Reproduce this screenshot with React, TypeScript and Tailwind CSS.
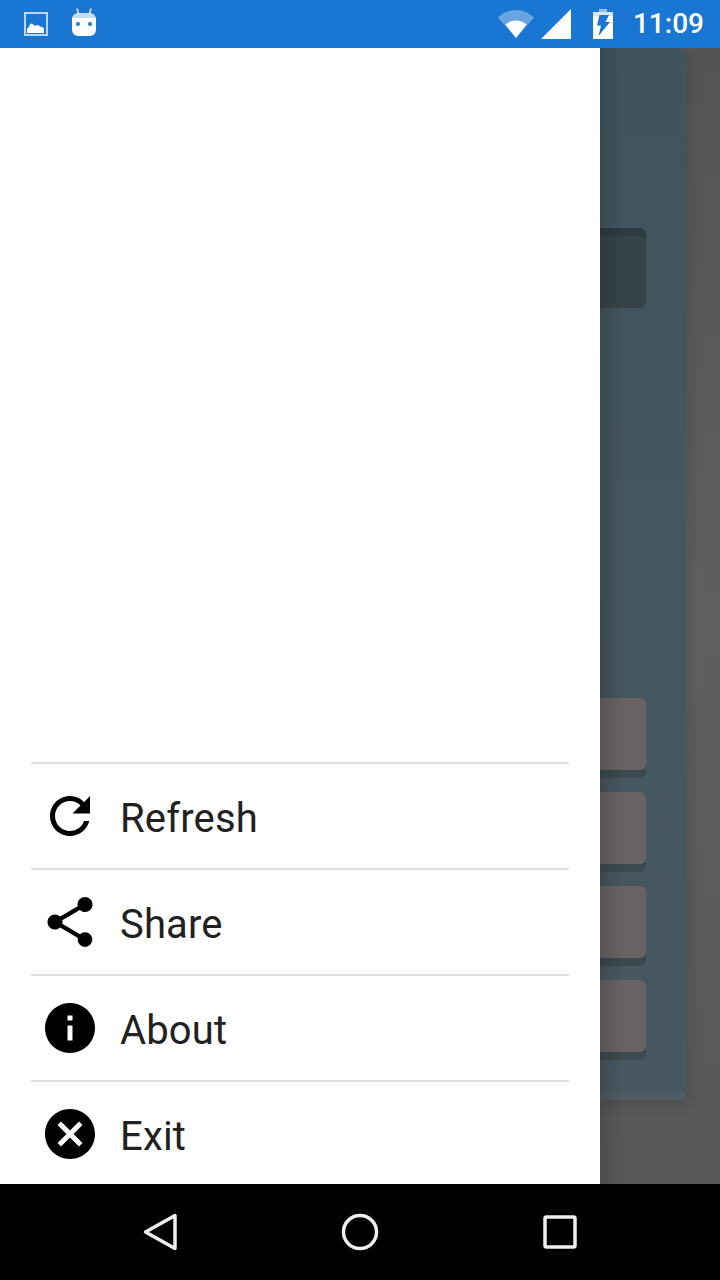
const rows = [
  { label: "Refresh", d: "M17.65 6.35C16.2 4.9 14.21 4 12 4c-4.42 0-7.99 3.58-7.99 8s3.57 8 7.99 8c3.73 0 6.84-2.55 7.73-6h-2.08c-.82 2.33-3.04 4-5.65 4-3.31 0-6-2.69-6-6s2.69-6 6-6c1.66 0 3.14.69 4.22 1.78L13 11h7V4l-2.35 2.35z" },
  { label: "Share", d: "M18 16.08c-.76 0-1.44.3-1.96.77L8.91 12.7c.05-.23.09-.46.09-.7s-.04-.47-.09-.7l7.05-4.11c.54.5 1.25.81 2.04.81 1.66 0 3-1.34 3-3s-1.34-3-3-3-3 1.34-3 3c0 .24.04.47.09.7L8.04 9.81C7.5 9.31 6.79 9 6 9c-1.66 0-3 1.34-3 3s1.34 3 3 3c.79 0 1.5-.31 2.04-.81l7.12 4.16c-.05.21-.08.43-.08.65 0 1.61 1.31 2.92 2.92 2.92s2.92-1.31 2.92-2.92-1.31-2.92-2.92-2.92z" },
  { label: "About", d: "M12 2C6.48 2 2 6.48 2 12s4.48 10 10 10 10-4.48 10-10S17.52 2 12 2zm1 15h-2v-6h2v6zm0-8h-2V7h2v2z" },
  { label: "Exit", d: "M12 2C6.47 2 2 6.47 2 12s4.47 10 10 10 10-4.47 10-10S17.53 2 12 2zm5 13.59L15.59 17 12 13.41 8.41 17 7 15.59 10.59 12 7 8.41 8.41 7 12 10.59 15.59 7 17 8.41 13.41 12 17 15.59z" },
];

function StatusBar() {
  return (
    <div className="h-[48px] bg-[#1976d2] flex items-center pl-[24px] pr-[16px] shrink-0">
      <svg width="24" height="24" viewBox="0 0 24 24">
        <rect x="1" y="1" width="22" height="22" fill="none" stroke="#fff" strokeWidth="2" opacity="0.7" />
        <path d="M3 21v-4.500c1-.3 1.500-1 2-2 .5-1.500 1-3 2.500-3 1.200 0 1.800 1.500 3 2.200 1 .5 1.800-.7 3-.7 1.500 0 2 1.500 3.500 1.800 1.500.2 2.500.5 3 2.500V21z" fill="#fff" />
      </svg>
      <svg width="24" height="32" viewBox="0 0 24 32" className="ml-[24px]">
        <path d="M5 0.500l1.500 5.500" stroke="#fff" strokeWidth="1.600" opacity="0.8" />
        <path d="M19 0.500l-1.500 5.500" stroke="#fff" strokeWidth="1.600" opacity="0.8" />
        <path d="M0 11.500C0 7.500 2.500 5 7 5h10c4.500 0 7 2.500 7 6.500V10H0z" fill="#fff" opacity="0.75" />
        <path d="M0 10h24v11c0 4.500-2.500 7-7 7H7c-4.500 0-7-2.500-7-7z" fill="#fff" />
        <circle cx="6" cy="16" r="2" fill="#1976d2" />
        <circle cx="18" cy="16" r="2" fill="#1976d2" />
      </svg>
      <div className="flex-1" />
      <svg width="36" height="28" viewBox="0 0 36 28">
        <path d="M0 7.500C4.800 3 11 0 18 0s13.200 3 18 7.500L18 28z" fill="#fff" opacity="0.35" />
        <path d="M7.500 14.500C10.400 12 14 10.500 18 10.500s7.600 1.500 10.500 4L18 28z" fill="#fff" />
      </svg>
      <svg width="30" height="30" viewBox="0 0 30 30" className="ml-[7px]">
        <path d="M30 0v30H0z" fill="#fff" />
      </svg>
      <svg width="20" height="30" viewBox="0 0 20 30" className="ml-[22px]">
        <path d="M6 0h8v3H6z" fill="#fff" opacity="0.55" />
        <path d="M0 3h20v4H0z" fill="#fff" opacity="0.75" />
        <path d="M0 7h20v23H0z" fill="#fff" />
        <path d="M0 3h20v27H0z" fill="#fff" opacity="0.3" />
        <path d="M6.500 6h9.500l-3.500 7h4.500L5.500 27l2.500-10.500H4z" fill="#1976d2" />
      </svg>
      <span className="ml-[20px] text-white text-[28px] leading-[48px] font-medium font-['Roboto',sans-serif]">11:09</span>
    </div>
  );
}

function Drawer() {
  return (
    <div className="w-[600px] bg-white shrink-0 px-[31px] pt-[714px] overflow-hidden">
      {rows.map((r) => (
        <div key={r.label} className="border-t-2 border-[#e0e0e0] h-[106px] flex items-center pl-[9px] shrink-0">
          <svg width="60" height="60" viewBox="0 0 24 24" fill="#000" className="shrink-0">
            <path d={r.d} />
          </svg>
          <span className="ml-[20px] pt-[5px] text-[40px] tracking-[0.15px] text-[#212121] font-['Roboto',sans-serif]">{r.label}</span>
        </div>
      ))}
    </div>
  );
}

function Btn({ dark }: { dark?: boolean }) {
  if (dark) {
    return (
      <div className="w-[46px] h-[80px] rounded-r-[6px] bg-[#2e3b42] pt-[8px]">
        <div className="h-[72px] rounded-r-[6px] bg-[#35444a]" />
      </div>
    );
  }
  return (
    <div className="w-[46px] h-[80px] rounded-r-[6px] bg-[#3b4a50]">
      <div className="h-[72px] rounded-r-[6px] bg-[#686263]" />
    </div>
  );
}

function Backdrop() {
  return (
    <div className="relative flex-1 overflow-hidden bg-gradient-to-b from-[#545454] via-[#5f5f5f] to-[#585858]">
      <div className="w-[86px] h-[1052px] rounded-br-[6px] rounded-tr-[6px] overflow-hidden bg-gradient-to-b from-[#41545e] to-[#475860] shadow-[2px_4px_14px_rgba(0,0,0,0.14)] flex flex-col">
        <div className="h-[180px] shrink-0" />
        <Btn dark />
        <div className="h-[390px] shrink-0" />
        <div className="flex flex-col gap-[14px]">
          <Btn />
          <Btn />
          <Btn />
          <Btn />
        </div>
        <div className="flex-1" />
        <div className="h-[8px] bg-[#4e5d64] shrink-0" />
      </div>
      <div className="absolute inset-y-0 left-0 w-[24px] bg-gradient-to-r from-black/15 to-transparent" />
    </div>
  );
}

function NavBar() {
  return (
    <div className="h-[96px] bg-black flex items-center justify-center shrink-0">
      <div className="w-[200px] flex justify-center">
        <svg width="40" height="40" viewBox="0 0 40 40">
          <path d="M35 3.500v33L5.500 20z" fill="none" stroke="#eeeeee" strokeWidth="3.500" strokeLinejoin="round" />
        </svg>
      </div>
      <div className="w-[200px] flex justify-center">
        <svg width="40" height="40" viewBox="0 0 40 40">
          <circle cx="20" cy="20" r="16.500" fill="none" stroke="#eeeeee" strokeWidth="3.500" />
        </svg>
      </div>
      <div className="w-[200px] flex justify-center">
        <svg width="40" height="40" viewBox="0 0 40 40">
          <rect x="5" y="5" width="30" height="30" rx="1.500" fill="none" stroke="#eeeeee" strokeWidth="3.500" />
        </svg>
      </div>
    </div>
  );
}

export default function App() {
  return (
    <div className="w-[720px] h-[1280px] flex flex-col overflow-hidden">
      <StatusBar />
      <div className="flex h-[1136px]">
        <Drawer />
        <Backdrop />
      </div>
      <NavBar />
    </div>
  );
}
